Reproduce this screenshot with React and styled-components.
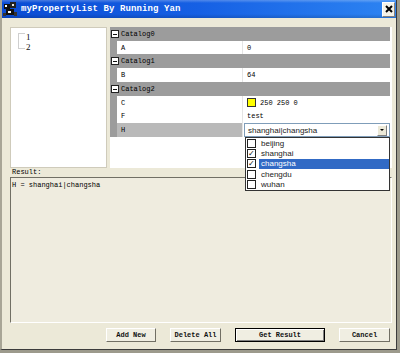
import styled, { createGlobalStyle } from 'styled-components';

const GlobalStyle = createGlobalStyle`
  body {
    margin: 0;
    background: #9c9a8c;
    font-family: "Liberation Mono", monospace;
  }
`;

const Window = styled.div`
  width: 397px;
  height: 350px;
  box-sizing: border-box;
  display: flex;
  flex-direction: column;
  background: #ece9d8;
  border-left: 2px solid #a8a596;
  border-right: 1px solid #3c3c3c;
  border-bottom: 1px solid #3c3c3c;
`;

const TitleBar = styled.div`
  height: 18px;
  flex: none;
  display: flex;
  align-items: center;
  background: linear-gradient(180deg, rgba(255,255,255,0.25) 0, rgba(255,255,255,0) 3px, rgba(0,0,0,0) 14px, rgba(0,0,0,0.15) 18px),
    linear-gradient(90deg, #0a4cd4 0%, #1660e4 50%, #2d84f2 100%);
`;

const TitleText = styled.span`
  margin-left: 3px;
  color: #fff;
  font: bold 9px "Liberation Mono", monospace;
  letter-spacing: 0.1px;
`;

const CloseButton = styled.div`
  margin-left: auto;
  margin-right: 1px;
  width: 11px;
  height: 13px;
  display: flex;
  align-items: center;
  justify-content: center;
  background: #f4f2e8;
  border: 1px solid #fff;
  border-right-color: #808080;
  border-bottom-color: #808080;
`;

const Body = styled.div`
  flex: 1;
  display: flex;
  flex-direction: column;
  padding: 9px 4px 0 8px;
`;

const TopPane = styled.div`
  display: grid;
  grid-template-columns: 97px 282px;
  column-gap: 3px;
  height: 141px;
`;

const Tree = styled.div`
  background: #fff;
  border: 1px solid #cfcbbb;
  padding: 4px 0 0 7px;
  display: flex;
  align-items: flex-start;
  gap: 1px;
`;

const TreeBracket = styled.span`
  width: 6px;
  height: 14px;
  margin-top: 1px;
  border: 1px solid #cfcfcf;
  border-right: none;
`;

const TreeList = styled.div`
  display: flex;
  flex-direction: column;
`;

const TreeItem = styled.div`
  height: 10px;
  line-height: 9px;
  font: 9px "Liberation Serif", serif;
  color: #111;
`;

const PropGrid = styled.div`
  background: #fff;
  padding-right: 2px;
  display: flex;
  flex-direction: column;
  font-size: 7px;
  color: #000;
`;

const HeaderRow = styled.div`
  height: ${p => p.h}px;
  display: flex;
  align-items: center;
  background: #9c9c9c;
  padding-left: 1px;
  gap: 2px;
`;

const Toggle = styled.span`
  width: 6px;
  height: 6px;
  border: 1px solid #222;
  background: #fff;
  display: flex;
  align-items: center;
  justify-content: center;
  &::before {
    content: "";
    width: 4px;
    height: 1px;
    background: #111;
  }
`;

const DataRow = styled.div`
  height: ${p => p.h}px;
  display: grid;
  grid-template-columns: 7px 126px 147px;
`;

const Strip = styled.div`
  background: #9c9c9c;
`;

const LabelCell = styled.div`
  display: flex;
  align-items: center;
  padding-left: 4px;
  background: ${p => (p.selected ? '#b9b9b9' : '#fff')};
  border-right: 1px solid #e4e4e4;
`;

const ValueCell = styled.div`
  display: flex;
  align-items: center;
  padding-left: 4px;
  gap: 4px;
  position: relative;
`;

const Swatch = styled.span`
  width: 9px;
  height: 9px;
  background: #ffff00;
  border: 1px solid #333;
  box-sizing: border-box;
`;

const Combo = styled.div`
  position: absolute;
  left: 1px;
  right: 0;
  top: 0;
  bottom: 0;
  box-sizing: border-box;
  border: 1px solid #7f9db9;
  background: #fff;
  display: flex;
  align-items: center;
  padding-left: 3px;
  font: 8px "Liberation Sans", Arial, sans-serif;
  color: #222;
`;

const ComboArrow = styled.span`
  margin-left: auto;
  margin-right: 2px;
  width: 8px;
  height: 9px;
  display: flex;
  align-items: center;
  justify-content: center;
  background: #ece9d8;
  border: 1px solid #fff;
  border-right-color: #808080;
  border-bottom-color: #808080;
  &::before {
    content: "";
    border-left: 2px solid transparent;
    border-right: 2px solid transparent;
    border-top: 2px solid #000;
  }
`;

const DropList = styled.div`
  position: absolute;
  top: 14px;
  left: 2px;
  right: 0;
  z-index: 5;
  background: #fff;
  border: 1px solid #333;
  display: flex;
  flex-direction: column;
  font: 8px "Liberation Sans", Arial, sans-serif;
`;

const DropItem = styled.div`
  height: 10.4px;
  display: flex;
  align-items: center;
  gap: 3px;
  padding-left: 1px;
`;

const Check = styled.span`
  width: 9px;
  height: 9px;
  box-sizing: border-box;
  border: 1.5px solid #222;
  background: #fff;
  display: flex;
  align-items: center;
  justify-content: center;
  font-size: 8px;
  line-height: 1;
  color: #111;
`;

const ItemText = styled.span`
  flex: 1;
  height: 100%;
  display: flex;
  align-items: center;
  padding-left: 2px;
  color: ${p => (p.selected ? '#fff' : '#222')};
  background: ${p => (p.selected ? '#316ac5' : 'transparent')};
`;

const ResultLabel = styled.div`
  height: 9px;
  font-size: 7px;
  line-height: 9px;
  color: #000;
  margin-left: 2px;
`;

const ResultBox = styled.div`
  height: 146px;
  box-sizing: border-box;
  border: 1px solid;
  border-color: #716f64 #fff #fff #716f64;
  background: #efecdf;
  padding: 3px 1px;
  font-size: 7px;
  color: #000;
`;

const ButtonRow = styled.div`
  margin-top: 5px;
  display: flex;
  justify-content: flex-end;
  gap: 14px;
  padding-right: 2px;
`;

const Button = styled.div`
  width: ${p => p.w}px;
  height: 14px;
  box-sizing: border-box;
  display: flex;
  align-items: center;
  justify-content: center;
  font: bold 7px "Liberation Mono", monospace;
  color: #111;
  background: #f0eee2;
  border: 1px solid;
  border-color: ${p => (p.primary ? '#000' : '#fff #716f64 #716f64 #fff')};
  box-shadow: ${p => (p.primary ? 'inset 1px 1px #fff, inset -1px -1px #808080' : 'none')};
`;

const AppIcon = () => (
  <svg width="16" height="16" viewBox="0 0 16 16">
    <rect x="2" y="3" width="6" height="5" fill="#111" />
    <rect x="3" y="4" width="2" height="2" fill="#fff" />
    <rect x="8" y="1" width="6" height="6" fill="#222" />
    <rect x="10" y="3" width="2" height="2" fill="#e8e8e8" />
    <rect x="4" y="8" width="8" height="6" fill="#111" />
    <rect x="6" y="10" width="3" height="2" fill="#fff" />
    <rect x="1" y="12" width="3" height="3" fill="#333" />
    <rect x="12" y="11" width="3" height="4" fill="#333" />
  </svg>
);

const CloseIcon = () => (
  <svg width="8" height="8" viewBox="0 0 8 8">
    <path d="M1 1 L7 7 M7 1 L1 7" stroke="#000" strokeWidth="2" />
  </svg>
);

const cities = [
  { name: 'beijing', checked: false },
  { name: 'shanghai', checked: true },
  { name: 'changsha', checked: true, selected: true },
  { name: 'chengdu', checked: false },
  { name: 'wuhan', checked: false },
];

export default function App() {
  return (
    <>
      <GlobalStyle />
      <Window>
        <TitleBar>
          <AppIcon />
          <TitleText>myPropertyList By Running Yan</TitleText>
          <CloseButton><CloseIcon /></CloseButton>
        </TitleBar>
        <Body>
          <TopPane>
            <Tree>
              <TreeBracket />
              <TreeList>
                <TreeItem>1</TreeItem>
                <TreeItem>2</TreeItem>
              </TreeList>
            </Tree>
            <PropGrid>
              <HeaderRow h={14}><Toggle />Catalog0</HeaderRow>
              <DataRow h={13}>
                <Strip /><LabelCell>A</LabelCell><ValueCell>0</ValueCell>
              </DataRow>
              <HeaderRow h={14}><Toggle />Catalog1</HeaderRow>
              <DataRow h={14}>
                <Strip /><LabelCell>B</LabelCell><ValueCell>64</ValueCell>
              </DataRow>
              <HeaderRow h={14}><Toggle />Catalog2</HeaderRow>
              <DataRow h={13}>
                <Strip /><LabelCell>C</LabelCell><ValueCell><Swatch />250 250 0</ValueCell>
              </DataRow>
              <DataRow h={14}>
                <Strip /><LabelCell>F</LabelCell><ValueCell>test</ValueCell>
              </DataRow>
              <DataRow h={14}>
                <Strip /><LabelCell selected>H</LabelCell>
                <ValueCell>
                  <Combo>shanghai|changsha<ComboArrow /></Combo>
                  <DropList>
                    {cities.map(c => (
                      <DropItem key={c.name}>
                        <Check>{c.checked ? '✓' : ''}</Check>
                        <ItemText selected={c.selected}>{c.name}</ItemText>
                      </DropItem>
                    ))}
                  </DropList>
                </ValueCell>
              </DataRow>
            </PropGrid>
          </TopPane>
          <ResultLabel>Result:</ResultLabel>
          <ResultBox>H = shanghai|changsha</ResultBox>
          <ButtonRow>
            <Button w={50}>Add New</Button>
            <Button w={51}>Delete All</Button>
            <Button w={90} primary>Get Result</Button>
            <Button w={51}>Cancel</Button>
          </ButtonRow>
        </Body>
      </Window>
    </>
  );
}
